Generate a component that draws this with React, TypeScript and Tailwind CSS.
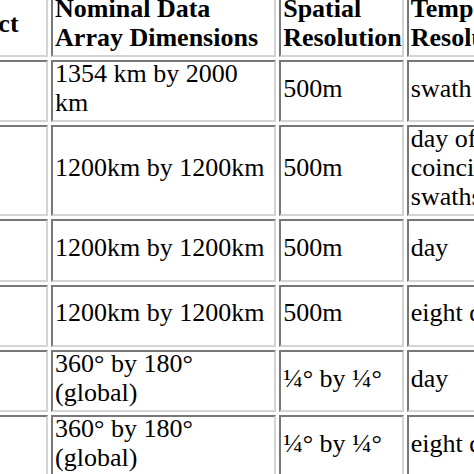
const rows: { size: string; dims: string; res: string; time: string; tall?: boolean }[] = [
  { size: "", dims: "1354 km by 2000 km", res: "500m", time: "swath" },
  { size: "", dims: "1200km by 1200km", res: "500m", time: "day of coincident swaths" },
  { size: "", dims: "1200km by 1200km", res: "500m", time: "day", tall: true },
  { size: "", dims: "1200km by 1200km", res: "500m", time: "eight day", tall: true },
  { size: "", dims: "360° by 180° (global)", res: "¼° by ¼°", time: "day" },
  { size: "", dims: "360° by 180° (global)", res: "¼° by ¼°", time: "eight day", tall: true },
];

const cell =
  "border-2 border-t-[#777777] border-l-[#777777] border-b-[#d4d4d4] border-r-[#d4d4d4] px-[2px] py-0 align-middle text-left";

const Cell = ({ children, head }: { children?: React.ReactNode; head?: boolean }) => {
  const Tag = head ? "th" : "td";
  return (
    <Tag className={cell + (head ? " font-bold" : " font-normal")}>
      <div className="mt-[-3px] pb-[3px]">{children}</div>
    </Tag>
  );
};

export default function App() {
  return (
    <div className="w-[474px] h-[474px] overflow-hidden bg-white text-black">
      <table className="table-fixed w-[628px] border-separate border-spacing-x-[3.5px] border-spacing-y-[3.75px] ml-[-77.5px] mt-[-8px] font-['Liberation_Serif',serif] text-[26px] leading-[29px]">
        <colgroup>
          <col className="w-[122px]" />
          <col className="w-[224px]" />
          <col className="w-[124px]" />
          <col className="w-[140px]" />
        </colgroup>
        <thead>
          <tr>
            <Cell head>Product</Cell>
            <Cell head>Nominal Data Array Dimensions</Cell>
            <Cell head>Spatial Resolution</Cell>
            <Cell head>Temporal Resolution</Cell>
          </tr>
        </thead>
        <tbody>
          {rows.map((r, i) => (
            <tr key={i} className={r.tall ? "h-[62.5px]" : ""}>
              <Cell>{r.size}</Cell>
              <Cell>{r.dims}</Cell>
              <Cell>{r.res}</Cell>
              <Cell>{r.time}</Cell>
            </tr>
          ))}
        </tbody>
      </table>
    </div>
  );
}
